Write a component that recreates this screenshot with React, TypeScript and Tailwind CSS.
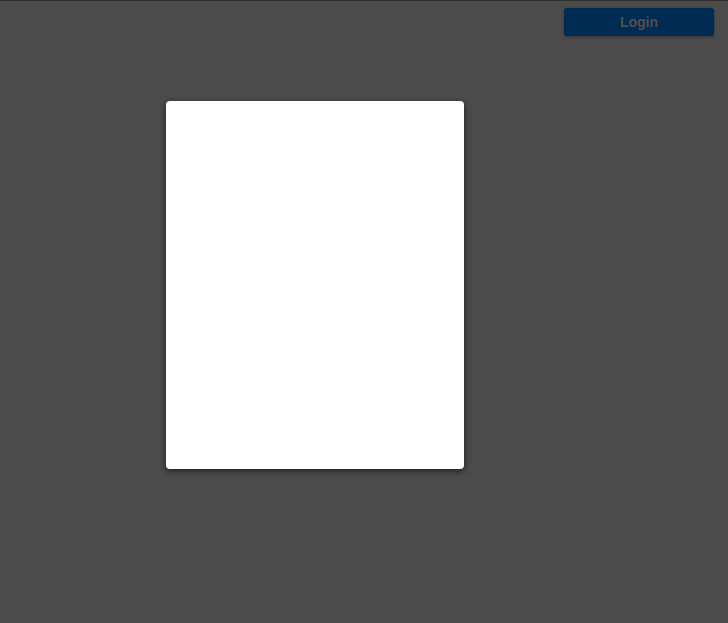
export default function App() {
  return (
    <div className="min-h-[623px] w-full bg-[#4b4b4b] border-t border-[#2e2e2e] font-['Liberation_Sans',Arial,sans-serif]">
      {/* Header */}
      <div className="flex justify-end pt-[7px] pr-[14px]">
        <button className="w-[150px] h-[28px] rounded-[3px] bg-[#002b53] text-[#505050] text-[14px] font-bold shadow-[0_1px_3px_rgba(0,0,0,0.35)]">
          Login
        </button>
      </div>

      {/* Card */}
      <div className="pl-[166px] pt-[65px]">
        <div className="w-[298px] h-[368px] bg-white rounded-[4px] shadow-[0_2px_6px_rgba(0,0,0,0.6)]" />
      </div>
    </div>
  );
}
